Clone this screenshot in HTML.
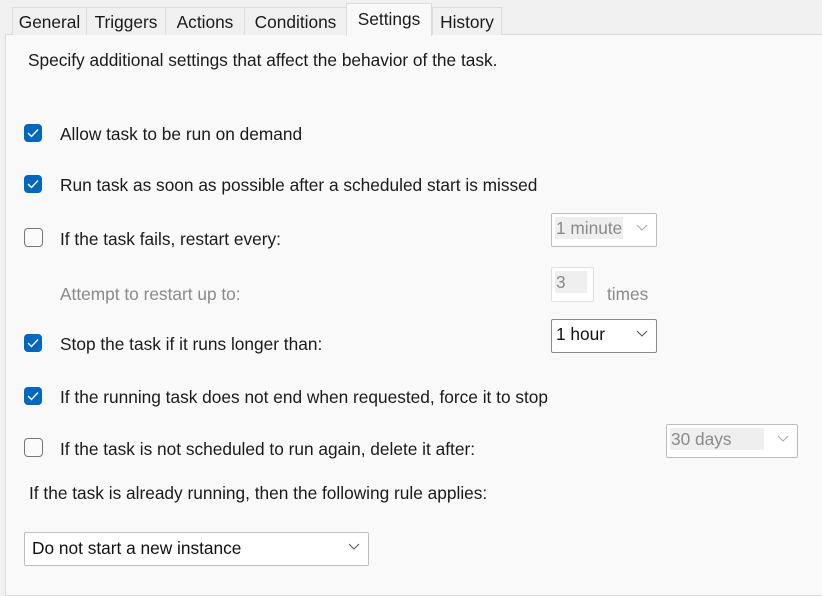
<!DOCTYPE html>
<html><head><style>
body{margin:0;width:822px;height:575px;background:#f0f0f0;font-family:"Liberation Sans",sans-serif;font-size:17.3px;color:#1a1a1a;position:relative;overflow:hidden}
.a{position:absolute;white-space:nowrap}
.panel{position:absolute;left:5px;top:34px;width:830px;height:560px;background:#f9f9f9;border:1px solid #dcdcdc}
.tab{position:absolute;top:7px;height:27px;background:#f0f0f0;border:1px solid #dcdcdc;border-bottom:none;text-align:center;line-height:28px}
.tab.sel{top:3px;height:32px;background:#f9f9f9;line-height:30px}
.cb{position:absolute;left:24px;width:18px;height:18px;border-radius:4px;background:#0067c0}
.cb svg{position:absolute;left:3px;top:4px}
.cb.off{background:#fbfbfb;border:1px solid #777;width:17px;height:17px}
.dd{position:absolute;border:1px solid #bdbdbd;background:#fff;border-radius:2px}
.dd .v{position:absolute;left:3px;top:3px;padding:0 1px;line-height:22px}
.chev{position:absolute;right:8px;top:10px}
.g{color:#8a8a8a}
</style></head><body>
<div class="panel"></div>
<div class="tab" style="left:12px;width:73px">General</div>
<div class="tab" style="left:86px;width:78px">Triggers</div>
<div class="tab" style="left:165px;width:78px">Actions</div>
<div class="tab" style="left:244px;width:101px">Conditions</div>
<div class="tab" style="left:346px;width:85px">Settings</div>
<div class="tab" style="left:432px;width:68px">History</div>
<div class="tab sel" style="left:346px;width:84px">Settings</div>

<div class="a" style="left:28px;top:50px">Specify additional settings that affect the behavior of the task.</div>

<div class="cb" style="top:124px"><svg width="12" height="10"><path d="M1 5l3.5 3.5L11 1.5" stroke="#fff" stroke-width="1.4" fill="none"/></svg></div>
<div class="a" style="left:60px;top:124px">Allow task to be run on demand</div>

<div class="cb" style="top:175px"><svg width="12" height="10"><path d="M1 5l3.5 3.5L11 1.5" stroke="#fff" stroke-width="1.4" fill="none"/></svg></div>
<div class="a" style="left:60px;top:175px">Run task as soon as possible after a scheduled start is missed</div>

<div class="cb off" style="top:228px"></div>
<div class="a" style="left:60px;top:229px">If the task fails, restart every:</div>
<div class="dd" style="left:551px;top:213px;width:104px;height:32px"><div class="v g" style="background:#efefef">1 minute</div><svg class="chev" width="12" height="7"><path d="M1 1l5 5 5-5" stroke="#aaa" fill="none"/></svg></div>

<div class="a g" style="left:60px;top:284px">Attempt to restart up to:</div>
<div class="dd" style="left:551px;top:267px;width:41px;height:33px;border-color:#e0e0e0"><div class="v g" style="background:#efefef;width:30px;top:3px">3</div></div>
<div class="a g" style="left:607px;top:284px">times</div>

<div class="cb" style="top:334px"><svg width="12" height="10"><path d="M1 5l3.5 3.5L11 1.5" stroke="#fff" stroke-width="1.4" fill="none"/></svg></div>
<div class="a" style="left:60px;top:334px">Stop the task if it runs longer than:</div>
<div class="dd" style="left:551px;top:319px;width:104px;height:32px;border-color:#8a8a8a"><div class="v" style="color:#111">1 hour</div><svg class="chev" width="12" height="7"><path d="M1 1l5 5 5-5" stroke="#555" fill="none"/></svg></div>

<div class="cb" style="top:387px"><svg width="12" height="10"><path d="M1 5l3.5 3.5L11 1.5" stroke="#fff" stroke-width="1.4" fill="none"/></svg></div>
<div class="a" style="left:60px;top:387px">If the running task does not end when requested, force it to stop</div>

<div class="cb off" style="top:438px"></div>
<div class="a" style="left:60px;top:439px">If the task is not scheduled to run again, delete it after:</div>
<div class="dd" style="left:666px;top:424px;width:130px;height:32px"><div class="v g" style="background:#efefef;width:92px">30 days</div><svg class="chev" width="12" height="7"><path d="M1 1l5 5 5-5" stroke="#aaa" fill="none"/></svg></div>

<div class="a" style="left:29px;top:483px">If the task is already running, then the following rule applies:</div>
<div class="dd" style="left:24px;top:532px;width:343px;height:32px"><div class="v" style="color:#111;left:6px;top:4px">Do not start a new instance</div><svg class="chev" width="12" height="7"><path d="M1 1l5 5 5-5" stroke="#555" fill="none"/></svg></div>
</body></html>
